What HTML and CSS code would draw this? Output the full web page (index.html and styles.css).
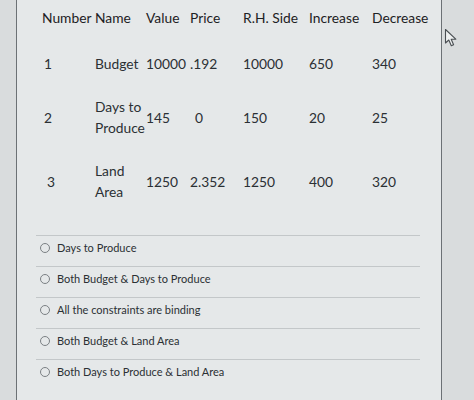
FILE: index.html
```html
<!DOCTYPE html>
<html>
<head>
<meta charset="utf-8">
<link rel="stylesheet" href="styles.css">
</head>
<body>
<div class="panel">
  <table class="sens">
    <colgroup>
      <col class="c1"><col class="c2"><col class="c3"><col class="c4"><col class="c5"><col class="c6"><col class="c7">
    </colgroup>
    <tr class="head">
      <th>Number</th><th>Name</th><th>Value</th><th>Price</th><th>R.H. Side</th><th>Increase</th><th>Decrease</th>
    </tr>
    <tr class="r1">
      <td class="num">1</td><td>Budget</td><td>10000</td><td>.192</td><td>10000</td><td>650</td><td>340</td>
    </tr>
    <tr class="r2">
      <td class="num">2</td><td>Days to<br>Produce</td><td>145</td><td class="zero">0</td><td>150</td><td>20</td><td>25</td>
    </tr>
    <tr class="r3">
      <td class="num n3">3</td><td>Land<br>Area</td><td>1250</td><td>2.352</td><td>1250</td><td>400</td><td>320</td>
    </tr>
  </table>
  <ul class="options">
    <li><span class="radio"></span>Days to Produce</li>
    <li><span class="radio"></span>Both Budget &amp; Days to Produce</li>
    <li><span class="radio"></span>All the constraints are binding</li>
    <li><span class="radio"></span>Both Budget &amp; Land Area</li>
    <li><span class="radio"></span>Both Days to Produce &amp; Land Area</li>
  </ul>
  <svg class="cursor" width="14" height="20" viewBox="0 0 14 20">
    <path d="M1.5 1.5 L1.5 15 L4.8 12 L7.3 17.8 L9.6 16.8 L7.2 11.2 L11.8 11.2 Z" fill="#eef0f0" stroke="#4a4f53" stroke-width="1.1" stroke-linejoin="round"/>
  </svg>
</div>
</body>
</html>
```
FILE: styles.css
```css
html, body {
  margin: 0;
  padding: 0;
  background: #d9dcdd;
  width: 474px;
  height: 400px;
  overflow: hidden;
}
body {
  font-family: Lato, "Liberation Sans", sans-serif;
  color: #2b3034;
}
.panel {
  position: relative;
  margin-left: 16px;
  width: 426px;
  height: 400px;
  background: #e5e8e9;
  border-left: 1.5px solid #6c7175;
  border-right: 1.5px solid #6c7175;
  box-sizing: border-box;
}
.sens {
  border-collapse: collapse;
  table-layout: fixed;
  margin-left: 25px;
  width: 400px;
  font-size: 13.8px;
}
.c1 { width: 53px; }
.c2 { width: 51px; }
.c3 { width: 44px; }
.c4 { width: 53px; }
.c5 { width: 66px; }
.c6 { width: 63px; }
.c7 { width: 70px; }
.sens th, .sens td {
  padding: 0;
  text-align: left;
  vertical-align: middle;
  white-space: nowrap;
  line-height: 21px;
}
.sens th {
  font-weight: normal;
  color: #1d2124;
}
.head { height: 34px; }
.r1 { height: 58px; }
.r2 { height: 50px; }
.r3 { height: 78px; }
.num { padding-left: 2px !important; }
.n3 { padding-left: 5px !important; }
.zero { padding-left: 5px !important; }
.options {
  list-style: none;
  margin: 15px 21px 0 19px;
  padding: 0;
  font-size: 11px;
}
.options li {
  border-top: 1px solid #c3c7c9;
  height: 31px;
  box-sizing: border-box;
  padding-top: 5px;
  line-height: 14px;
  display: flex;
  align-items: flex-start;
}
.radio {
  width: 10px;
  height: 10px;
  border: 1.4px solid #7b8084;
  border-radius: 50%;
  margin: 2px 7px 0 4px;
  flex: none;
  box-sizing: border-box;
}
.cursor {
  position: absolute;
  left: 427px;
  top: 28px;
}
```
